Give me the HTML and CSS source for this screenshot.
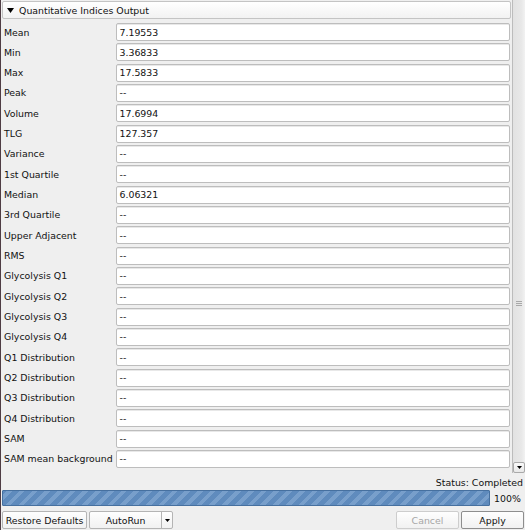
FILE: index.html
```html
<!DOCTYPE html>
<html>
<head>
<meta charset="utf-8">
<link rel="stylesheet" href="styles.css">
</head>
<body>
<div class="window">
  <div class="top">
    <div class="content">
      <div class="group-header">
        <svg class="caret" width="7" height="5" viewBox="0 0 7 5"><polygon points="0,0 7,0 3.5,5" fill="#000"/></svg>
        <span class="group-title">Quantitative Indices Output</span>
      </div>
      <div class="form">
        <label>Mean</label><div class="field">7.19553</div>
        <label>Min</label><div class="field">3.36833</div>
        <label>Max</label><div class="field">17.5833</div>
        <label>Peak</label><div class="field">--</div>
        <label>Volume</label><div class="field">17.6994</div>
        <label>TLG</label><div class="field">127.357</div>
        <label>Variance</label><div class="field">--</div>
        <label>1st Quartile</label><div class="field">--</div>
        <label>Median</label><div class="field">6.06321</div>
        <label>3rd Quartile</label><div class="field">--</div>
        <label>Upper Adjacent</label><div class="field">--</div>
        <label>RMS</label><div class="field">--</div>
        <label>Glycolysis Q1</label><div class="field">--</div>
        <label>Glycolysis Q2</label><div class="field">--</div>
        <label>Glycolysis Q3</label><div class="field">--</div>
        <label>Glycolysis Q4</label><div class="field">--</div>
        <label>Q1 Distribution</label><div class="field">--</div>
        <label>Q2 Distribution</label><div class="field">--</div>
        <label>Q3 Distribution</label><div class="field">--</div>
        <label>Q4 Distribution</label><div class="field">--</div>
        <label>SAM</label><div class="field">--</div>
        <label>SAM mean background</label><div class="field">--</div>
      </div>
    </div>
    <div class="scrollbar">
      <div class="track">
        <div class="grip"><i></i><i></i><i></i></div>
      </div>
      <div class="arrow">
        <svg width="5" height="3" viewBox="0 0 5 3"><polygon points="0,0 5,0 2.5,3" fill="#000"/></svg>
      </div>
    </div>
  </div>
  <div class="status">Status: Completed</div>
  <div class="progress-row">
    <div class="progress"></div>
    <span class="pct">100%</span>
  </div>
  <div class="buttons">
    <div class="btn restore">Restore Defaults</div>
    <div class="btn split">
      <span class="split-main">AutoRun</span>
      <span class="split-arrow"><svg width="5" height="3" viewBox="0 0 5 3"><polygon points="0,0 5,0 2.5,3" fill="#000"/></svg></span>
    </div>
    <div class="spacer"></div>
    <div class="btn cancel">Cancel</div>
    <div class="btn apply">Apply</div>
  </div>
</div>
</body>
</html>
```

FILE: styles.css
```css
html, body {
  margin: 0;
  padding: 0;
}
body {
  width: 525px;
  height: 530px;
  overflow: hidden;
  background: #efefef;
  font-family: "DejaVu Sans", "Noto Sans", sans-serif;
  font-size: 9.4px;
  color: #111;
}
.window {
  box-sizing: border-box;
  height: 530px;
  border-left: 1px solid #4f3d44;
  display: flex;
  flex-direction: column;
}
.top {
  display: flex;
  height: 473px;
}
.content {
  flex: 1;
  min-width: 0;
}
.group-header {
  box-sizing: border-box;
  height: 18px;
  margin: 1px 1px 0 1px;
  border: 1px solid #c4c4c4;
  border-radius: 2px;
  background: linear-gradient(#ffffff, #f2f2f2);
  display: flex;
  align-items: center;
  padding-left: 4px;
  gap: 5px;
}
.group-title {
  white-space: nowrap;
}
.caret {
  display: block;
  margin-top: 1px;
}
.form {
  display: grid;
  grid-template-columns: 111.5px 1fr;
  grid-auto-rows: 18px;
  row-gap: 2.33px;
  padding: 4px 2.5px 0 3px;
  align-items: center;
}
.form label {
  white-space: nowrap;
}
.field {
  box-sizing: border-box;
  height: 18px;
  border: 1px solid #bdbdbd;
  border-radius: 2px;
  background: #fff;
  padding-left: 3px;
  display: flex;
  align-items: center;
  box-shadow: inset 0 1px 0 #e8e8e8;
}
.scrollbar {
  width: 13px;
  display: flex;
  flex-direction: column;
  box-sizing: border-box;
  border-left: 1px solid #bcbcbc;
  background: #e4e4e4;
}
.track {
  flex: 1;
  position: relative;
  background: linear-gradient(90deg, #e2e2e2, #e8e8e8 70%, #f2f2f2);
}
.grip {
  position: absolute;
  top: 301px;
  left: 3px;
  width: 6px;
  display: flex;
  flex-direction: column;
  gap: 1px;
}
.grip i {
  display: block;
  height: 1px;
  background: #a8a8a8;
}
.arrow {
  box-sizing: border-box;
  height: 11px;
  border: 1px solid #a9a9a9;
  border-radius: 2px;
  background: linear-gradient(#fafafa, #e8e8e8);
  display: flex;
  align-items: center;
  justify-content: center;
}
.arrow svg {
  display: block;
}
.status {
  text-align: right;
  padding-right: 2px;
  height: 13px;
  line-height: 13px;
  margin-top: 3px;
}
.progress-row {
  display: flex;
  align-items: center;
  height: 16px;
  margin-top: 1px;
  padding-left: 1px;
}
.progress {
  box-sizing: border-box;
  width: 488px;
  height: 16px;
  border: 1px solid #46709f;
  border-radius: 1px;
  background-color: #6591c2;
  background-image: repeating-linear-gradient(-45deg, #5f8bbd 0px, #5f8bbd 5px, #789fcb 5px, #789fcb 9px);
}
.pct {
  margin-left: 4px;
}
.buttons {
  display: flex;
  margin-top: 5px;
  height: 18px;
  padding: 0 1px 0 1px;
}
.btn {
  box-sizing: border-box;
  height: 18px;
  border: 1px solid #b4b4b4;
  border-radius: 2px;
  background: linear-gradient(#fefefe, #f1f1f1);
  display: flex;
  align-items: center;
  justify-content: center;
}
.restore {
  width: 85px;
}
.split {
  width: 84px;
  margin-left: 2px;
  justify-content: flex-start;
}
.split-main {
  width: 71px;
  text-align: center;
  height: 100%;
  display: flex;
  align-items: center;
  justify-content: center;
  border-right: 1px solid #b4b4b4;
}
.split-arrow {
  flex: 1;
  display: flex;
  align-items: center;
  justify-content: center;
}
.split-arrow svg {
  display: block;
}
.spacer {
  flex: 1;
}
.cancel {
  width: 63px;
  color: #a6a6a6;
  border-color: #cdcdcd;
}
.apply {
  width: 63px;
  margin-left: 2px;
  border-color: #8e8e8e;
}
```
